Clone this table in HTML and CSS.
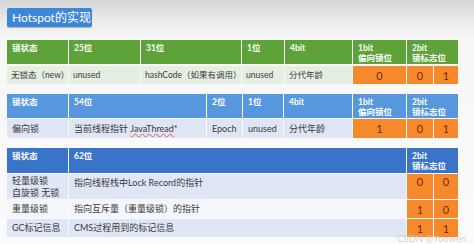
FILE: index.html
```html
<!DOCTYPE html>
<html lang="zh">
<head>
<meta charset="utf-8">
<link rel="stylesheet" href="styles.css">
</head>
<body>
<div class="page">
  <div class="title">Hotspot的实现</div>

  <div class="tbl t1 green">
    <div class="h">锁状态</div>
    <div class="h">25位</div>
    <div class="h">31位</div>
    <div class="h">1位</div>
    <div class="h">4bit</div>
    <div class="h">1bit<br>偏向锁位</div>
    <div class="h span2">2bit<br>锁标志位</div>
    <div class="d">无锁态（new）</div>
    <div class="d">unused</div>
    <div class="d">hashCode（如果有调用）</div>
    <div class="d">unused</div>
    <div class="d">分代年龄</div>
    <div class="o">0</div>
    <div class="o">0</div>
    <div class="o">1</div>
  </div>

  <div class="tbl t2 blue">
    <div class="h">锁状态</div>
    <div class="h">54位</div>
    <div class="h">2位</div>
    <div class="h">1位</div>
    <div class="h">4bit</div>
    <div class="h">1bit<br>偏向锁位</div>
    <div class="h span2">2bit<br>锁标志位</div>
    <div class="d">偏向锁</div>
    <div class="d">当前线程指针&nbsp;<span class="ul">JavaThread</span>*</div>
    <div class="d">Epoch</div>
    <div class="d">unused</div>
    <div class="d">分代年龄</div>
    <div class="o">1</div>
    <div class="o">0</div>
    <div class="o">1</div>
  </div>

  <div class="tbl t3 dblue">
    <div class="h">锁状态</div>
    <div class="h">62位</div>
    <div class="h span2">2bit<br>锁标志位</div>
    <div class="d tall">轻量级锁<br>自旋锁 无锁</div>
    <div class="d tall top">指向线程栈中Lock Record的指针</div>
    <div class="o tall top">0</div>
    <div class="o tall top">0</div>
    <div class="d w">重量级锁</div>
    <div class="d w">指向互斥量（重量级锁）的指针</div>
    <div class="o">1</div>
    <div class="o">0</div>
    <div class="d">GC标记信息</div>
    <div class="d">CMS过程用到的标记信息</div>
    <div class="o">1</div>
    <div class="o">1</div>
  </div>

  <div class="wm">CSDN @Yoowen</div>
</div>
</body>
</html>
```

FILE: styles.css
```css
* { box-sizing: border-box; }
html, body { margin: 0; padding: 0; }
body {
  width: 474px;
  height: 244px;
  overflow: hidden;
  background: linear-gradient(#d6d6d6 0px, #ececec 22px, #f7f7f7 40px, #fbfbfb 244px);
  font-family: "Lato", "Noto Sans CJK SC", sans-serif;
  color: #333;
}
.page {
  position: relative;
  height: 244px;
  padding: 8px 0 0 7px;
}
.title {
  width: 85px;
  height: 19px;
  background: #3d87d8;
  border-radius: 2px;
  color: #fff;
  font-size: 12px;
  line-height: 19px;
  padding-left: 5px;
  box-shadow: 0 1px 1px rgba(0,0,0,0.25);
  white-space: nowrap;
}
.tbl {
  display: grid;
  column-gap: 1px;
  row-gap: 2px;
  width: 452px;
}
.t1 {
  margin-top: 13px;
  grid-template-columns: 61px 71px 100px 42px 67px 53px 26px 24px;
  grid-template-rows: 24px 18px;
}
.t2 {
  margin-top: 10px;
  grid-template-columns: 61px 137px 35px 40px 68px 53px 26px 24px;
  grid-template-rows: 24px 19px;
  row-gap: 1px;
}
.t3 {
  margin-top: 10px;
  grid-template-columns: 61px 337px 26px 24px;
  grid-template-rows: 25px 25px 18px 18px;
  row-gap: 1px;
}
.h {
  color: #fff;
  font-weight: 700;
  font-size: 8.5px;
  line-height: 10px;
  padding: 3px 5px 0;
  white-space: nowrap;
}
.span2 { grid-column: span 2; }
.green .h { background: #5ea23a; }
.blue .h { background: #5797dd; }
.dblue .h { background: #3a74c9; }
.d {
  font-size: 8.5px;
  line-height: 11px;
  padding: 0 4px;
  display: flex;
  align-items: center;
  white-space: nowrap;
  color: #3a3a3a;
  overflow: hidden;
}
.t2 .d, .t3 .d { font-size: 9px; line-height: 12px; padding: 0 5px; }
.t3 .d.top { align-items: flex-start; padding-top: 3px; }
.green .d { background: #e6ede1; }
.blue .d { background: #dee5f5; }
.dblue .d { background: #dfe6f6; }
.dblue .d.w { background: #f4f6fb; }
.o {
  background: #f6892c;
  color: #7a2800;
  font-size: 11px;
  display: flex;
  align-items: center;
  justify-content: center;
}
.o.top { align-items: flex-start; padding-top: 1px; }
.ul {
  text-decoration: underline wavy #e06060;
  text-decoration-thickness: 0.5px;
}
.wm {
  position: absolute;
  left: 397px;
  top: 233px;
  font-size: 9.5px;
  line-height: 11px;
  color: rgba(205, 205, 205, 0.85);
  white-space: nowrap;
}
```
